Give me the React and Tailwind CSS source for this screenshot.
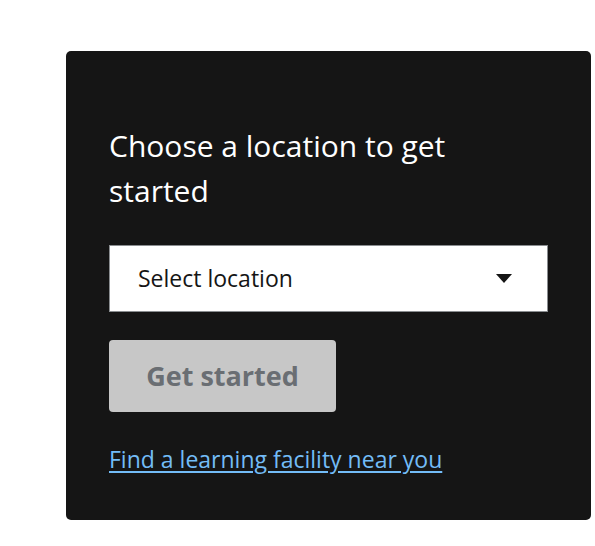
export default function App() {
  return (
    <div className="min-h-screen bg-white" style={{ fontFamily: '"Open Sans", "Noto Sans", sans-serif' }}>
      <div className="pt-[51px] pl-[66px] pr-[4px]">
        <div className="bg-[#151515] rounded-[5px] px-[43px] pt-[72px] pb-[43px]">
          <h2 className="text-[30px] leading-[45px] text-white font-normal">
            Choose a location to get started
          </h2>
          <button className="mt-[32px] w-full h-[67px] bg-white border border-[#8a8d90] flex items-center justify-between pl-[28px] pr-[35px] text-left">
            <span className="text-[23px] text-[#151515]">Select location</span>
            <svg width="16" height="9" viewBox="0 0 16 9">
              <path d="M0 0 H16 L8 9 Z" fill="#151515" />
            </svg>
          </button>
          <button className="mt-[28px] w-[227px] h-[72px] rounded-[4px] bg-[#c7c7c7] text-[#6a6e73] text-[27px] font-bold">
            Get started
          </button>
          <div className="mt-[29px]">
            <a href="#" className="text-[23px] leading-[36px] text-[#73bcf7] underline underline-offset-[3px]">
              Find a learning facility near you
            </a>
          </div>
        </div>
      </div>
    </div>
  );
}
